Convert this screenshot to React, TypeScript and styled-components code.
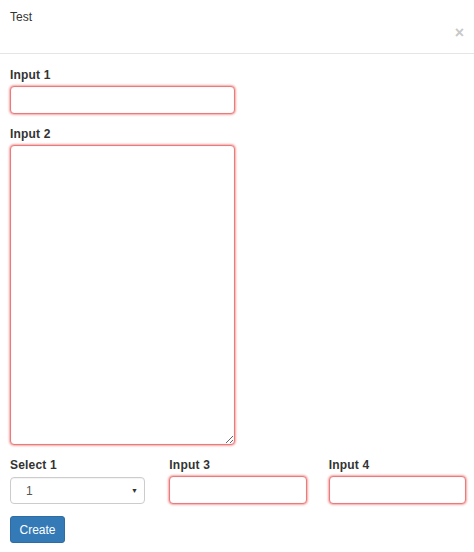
import styled, { createGlobalStyle } from "styled-components";

const GlobalStyle = createGlobalStyle`
	html,
	body {
		margin: 0;
		background: #fff;
		font-family: "Liberation Sans", Arial, sans-serif;
		color: #333;
	}
	* {
		box-sizing: border-box;
	}
`;

const Modal = styled.div`
	width: 474px;
	min-height: 552px;
	background: #fff;
`;

const ModalHeader = styled.header`
	height: 54px;
	padding: 9px 10px 0 10px;
	border-bottom: 1px solid #e5e5e5;
	display: flex;
	justify-content: space-between;
	align-items: flex-start;
`;

const ModalTitle = styled.h4`
	margin: 0;
	font-size: 12px;
	line-height: 17px;
	font-weight: normal;
	color: #333;
`;

const CloseButton = styled.button`
	margin-top: 16px;
	padding: 0;
	border: none;
	background: transparent;
	font-family: inherit;
	font-size: 16px;
	line-height: 16px;
	font-weight: bold;
	color: #c8c8c8;
	cursor: pointer;
`;

const ModalBody = styled.form`
	padding: 13px 10px 10px 10px;
	display: flex;
	flex-direction: column;
	gap: 12px;
`;

const Field = styled.div`
	display: flex;
	flex-direction: column;
	gap: 2px;
`;

const Label = styled.label`
	font-size: 12px;
	line-height: 17px;
	font-weight: bold;
	color: #333;
	letter-spacing: 0.2px;
`;

const invalid = `
	border: 1px solid #e87b7b;
	border-radius: 4px;
	box-shadow: 0 0 2px 1px rgba(235, 95, 95, 0.55), inset 0 0 1px rgba(235, 95, 95, 0.4);
	background: #fff;
	outline: none;
	font-family: inherit;
	font-size: 12px;
	color: #555;
`;

const TextInput = styled.input<{ $width?: number }>`
	${invalid}
	width: ${({ $width }) => ($width ? `${$width}px` : "100%")};
	height: 28px;
	padding: 4px 8px;
`;

const TextArea = styled.textarea`
	${invalid}
	width: 225px;
	height: 300px;
	padding: 4px 8px;
	resize: both;
`;

const Row = styled.div`
	width: 456px;
	display: grid;
	grid-template-columns: repeat(3, 1fr);
	column-gap: 22px;
`;

const SelectWrap = styled.div`
	position: relative;
	width: 135px;
	height: 27px;
	margin-top: 1px;
`;

const Select = styled.select`
	appearance: none;
	width: 100%;
	height: 100%;
	padding: 0 20px 0 15px;
	border: 1px solid #ccc;
	border-radius: 4px;
	background: #fff;
	font-family: inherit;
	font-size: 12px;
	color: #555;
	box-shadow: inset 0 1px 1px rgba(0, 0, 0, 0.05);
`;

const Caret = styled.span`
	position: absolute;
	right: 7px;
	top: 9px;
	font-size: 7px;
	line-height: 9px;
	color: #333;
	pointer-events: none;
`;

const PrimaryButton = styled.button`
	align-self: flex-start;
	width: 55px;
	height: 27px;
	padding: 0;
	border: 1px solid #2e6da4;
	border-radius: 3px;
	background: #337ab7;
	color: #fff;
	font-family: inherit;
	font-size: 12px;
	cursor: pointer;
`;

export default function App() {
	return (
		<>
			<GlobalStyle />
			<Modal>
				<ModalHeader>
					<ModalTitle>Test</ModalTitle>
					<CloseButton type="button" aria-label="Close">
						×
					</CloseButton>
				</ModalHeader>
				<ModalBody onSubmit={(e) => e.preventDefault()}>
					<Field>
						<Label htmlFor="input1">Input 1</Label>
						<TextInput id="input1" $width={225} />
					</Field>
					<Field>
						<Label htmlFor="input2">Input 2</Label>
						<TextArea id="input2" />
					</Field>
					<Row>
						<Field>
							<Label htmlFor="select1">Select 1</Label>
							<SelectWrap>
								<Select id="select1" defaultValue="1">
									<option value="1">1</option>
									<option value="2">2</option>
									<option value="3">3</option>
								</Select>
								<Caret>▼</Caret>
							</SelectWrap>
						</Field>
						<Field>
							<Label htmlFor="input3">Input 3</Label>
							<TextInput id="input3" />
						</Field>
						<Field>
							<Label htmlFor="input4">Input 4</Label>
							<TextInput id="input4" />
						</Field>
					</Row>
					<PrimaryButton type="submit">Create</PrimaryButton>
				</ModalBody>
			</Modal>
		</>
	);
}
